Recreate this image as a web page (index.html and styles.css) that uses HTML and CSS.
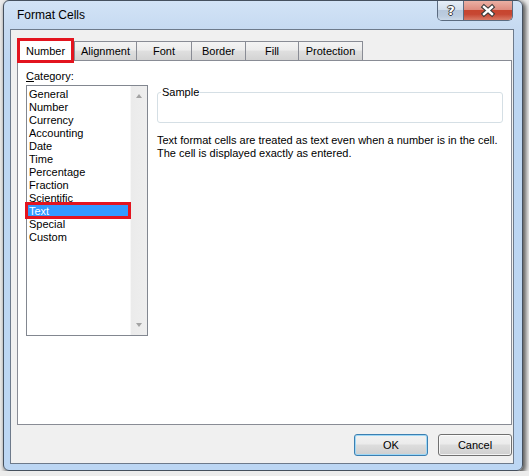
FILE: index.html
```html
<!DOCTYPE html>
<html>
<head>
<meta charset="utf-8">
<title>Format Cells</title>
<link rel="stylesheet" href="styles.css">
</head>
<body>
<div class="window">
  <div class="titlebar">
    <span class="title">Format Cells</span>
    <div class="caption-buttons">
      <div class="cap-btn help"><span>?</span></div>
      <div class="cap-btn close">
        <svg width="48" height="19" viewBox="0 0 48 19">
          <path d="M20 6 L28 13 M28 6 L20 13" stroke="#3a3a3a" stroke-width="4.6" stroke-linecap="square" fill="none"/>
          <path d="M20 6 L28 13 M28 6 L20 13" stroke="#ffffff" stroke-width="2.4" stroke-linecap="square" fill="none"/>
        </svg>
      </div>
    </div>
  </div>
  <div class="client">
    <div class="tabs">
      <div class="tab selected">Number</div>
      <div class="tab t-align">Alignment</div>
      <div class="tab t-font">Font</div>
      <div class="tab t-border">Border</div>
      <div class="tab t-fill">Fill</div>
      <div class="tab t-prot">Protection</div>
    </div>
    <div class="panel">
      <div class="left-col">
        <div class="label"><u>C</u>ategory:</div>
        <div class="listbox">
          <ul class="items">
            <li>General</li>
            <li>Number</li>
            <li>Currency</li>
            <li>Accounting</li>
            <li>Date</li>
            <li>Time</li>
            <li>Percentage</li>
            <li>Fraction</li>
            <li>Scientific</li>
            <li class="sel">Text</li>
            <li>Special</li>
            <li>Custom</li>
          </ul>
          <div class="scrollbar">
            <span class="arrow up"></span>
            <span class="arrow down"></span>
          </div>
        </div>
      </div>
      <div class="right-col">
        <fieldset class="sample">
          <legend>Sample</legend>
          <div class="sample-body"></div>
        </fieldset>
        <p class="desc">Text format cells are treated as text even when a number is in the cell.<br>The cell is displayed exactly as entered.</p>
      </div>
    </div>
    <div class="buttons">
      <button class="btn default">OK</button>
      <button class="btn">Cancel</button>
    </div>
  </div>
</div>
</body>
</html>
```

FILE: styles.css
```css
html, body {
  margin: 0;
  padding: 0;
}
body {
  background: #ececec;
  font-family: "Liberation Sans", Arial, sans-serif;
  font-size: 11px;
  color: #000;
}
.window {
  margin-left: 3px;
  width: 520px;
  height: 471px;
  box-sizing: border-box;
  border: 1px solid #45505e;
  border-radius: 6px;
  background: linear-gradient(180deg, #d2e3f6 0px, #c6daf1 28px, #bdd6f2 60px, #bcd6f3 100%);
  padding: 0 8px 6px 6px;
  box-shadow: 2px 2px 4px 1px rgba(0, 0, 0, 0.6);
  display: flex;
  flex-direction: column;
}
.titlebar {
  height: 28px;
  display: flex;
  align-items: flex-start;
}
.title {
  font-size: 12px;
  line-height: 15px;
  padding: 7px 0 0 7px;
  color: #000;
}
.caption-buttons {
  margin-left: auto;
  margin-right: 1px;
  display: flex;
  height: 20px;
  box-sizing: border-box;
  border: 1px solid #5b6b80;
  border-top: none;
  border-radius: 0 0 5px 5px;
  overflow: hidden;
}
.cap-btn {
  height: 19px;
  display: flex;
  align-items: center;
  justify-content: center;
}
.help {
  width: 25px;
  border-right: 1px solid #5b6b80;
  background: linear-gradient(180deg, #e6eef7 0%, #d3dfec 45%, #b7c8dc 50%, #bccde0 80%, #cbd9e8 100%);
}
.help span {
  font-family: "DejaVu Sans", sans-serif;
  font-weight: bold;
  font-size: 13px;
  line-height: 13px;
  color: #fff;
  margin-left: 1px;
  text-shadow: 1px 0 0 #3a3a3a, -1px 0 0 #3a3a3a, 0 1px 0 #3a3a3a, 0 -1px 0 #3a3a3a;
}
.close {
  width: 48px;
  background: linear-gradient(180deg, #eab0a4 0%, #de8d80 45%, #c7452f 50%, #c74733 70%, #d97a66 100%);
}
.close svg {
  display: block;
}
.client {
  height: 435px;
  box-sizing: border-box;
  border: 1px solid #6d7a8b;
  background: #f0f0f0;
  padding: 8px 1px 7px 6px;
  display: flex;
  flex-direction: column;
}
.tabs {
  height: 22px;
  display: flex;
  align-items: flex-end;
  flex: none;
}
.tab {
  height: 19px;
  box-sizing: border-box;
  border: 1px solid #898c95;
  border-bottom: none;
  border-right: none;
  background: linear-gradient(180deg, #f4f4f4 0%, #ececec 45%, #dfdfdf 50%, #d3d3d3 100%);
  text-align: center;
  line-height: 18px;
  white-space: nowrap;
}
.tab.selected {
  position: relative;
  z-index: 1;
  width: 57px;
  height: 23px;
  margin-bottom: -1px;
  border-right: 1px solid #898c95;
  background: #fff;
  padding-top: 3px;
}
.tab.selected::after {
  content: "";
  position: absolute;
  left: -1px;
  right: -1px;
  top: -1px;
  bottom: -2px;
  border: 3px solid #e3141f;
}
.t-align { width: 62px; }
.t-font { width: 55px; }
.t-border { width: 54px; }
.t-fill { width: 53px; }
.t-prot { width: 65px; border-right: 1px solid #898c95; }
.panel {
  height: 365px;
  flex: none;
  box-sizing: border-box;
  border: 1px solid #898c95;
  background: #fff;
  padding: 9px 8px 0 8px;
  display: flex;
  gap: 9px;
}
.left-col {
  width: 122px;
  flex: none;
}
.label {
  line-height: 13px;
  margin-bottom: 2px;
}
.listbox {
  height: 251px;
  box-sizing: border-box;
  border: 1px solid #828790;
  display: flex;
}
.items {
  list-style: none;
  margin: 0;
  padding: 1px 2px 0 1px;
  flex: 1;
}
.items li {
  height: 13px;
  box-sizing: border-box;
  padding: 1px 0 0 1px;
  line-height: 12px;
  white-space: nowrap;
}
.items li.sel {
  position: relative;
  background: #3399ff;
  color: #fff;
}
.items li.sel::after {
  content: "";
  position: absolute;
  left: -3px;
  right: -3px;
  top: -2px;
  bottom: -2px;
  border: 3px solid #e3141f;
}
.scrollbar {
  width: 17px;
  flex: none;
  box-sizing: border-box;
  background: linear-gradient(90deg, #f7f7f7 0, #f7f7f7 1px, #ebebeb 1px, #eeeeee 100%);
  display: flex;
  flex-direction: column;
  justify-content: space-between;
  align-items: center;
  padding: 8px 0 8px 1px;
}
.arrow {
  width: 0;
  height: 0;
  border-left: 3.5px solid transparent;
  border-right: 3.5px solid transparent;
}
.arrow.up {
  border-bottom: 4px solid #a3a3a3;
}
.arrow.down {
  border-top: 4px solid #a3a3a3;
}
.right-col {
  flex: 1;
  min-width: 0;
  margin-top: 16px;
}
.sample {
  margin: 0;
  padding: 0 0 0 3px;
  border: 1px solid #d5dfe5;
  border-radius: 3px;
  min-width: 0;
}
.sample legend {
  padding: 0 1px;
  line-height: 12px;
  font-size: 11px;
}
.sample-body {
  height: 24px;
}
.desc {
  margin: 11px 0 0 0;
  line-height: 13px;
  white-space: nowrap;
}
.buttons {
  margin-top: 9px;
  display: flex;
  justify-content: flex-end;
  gap: 10px;
}
.btn {
  width: 74px;
  height: 22px;
  box-sizing: border-box;
  padding: 0;
  margin: 0;
  font-family: "Liberation Sans", Arial, sans-serif;
  font-size: 11px;
  line-height: 20px;
  color: #000;
  border: 1px solid #707070;
  border-radius: 3px;
  background: linear-gradient(180deg, #f2f2f2 0%, #ebebeb 45%, #dddddd 50%, #cfcfcf 100%);
  box-shadow: inset 0 0 0 1px rgba(255, 255, 255, 0.75);
}
.btn.default {
  border-color: #3c7fb1;
  box-shadow: inset 0 0 0 1px #9fd8f6;
}
```
